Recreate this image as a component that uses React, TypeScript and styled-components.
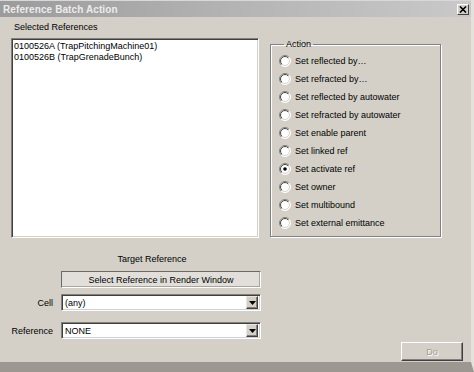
import React from 'react';
import styled, { createGlobalStyle } from 'styled-components';

const GlobalStyle = createGlobalStyle`
  html, body {
    margin: 0;
    padding: 0;
    background: #d4d0c8;
  }

  body {
    font-family: "Liberation Sans", Arial, sans-serif;
    font-size: 9px;
    color: #000;
  }
`;

const StyledWindow = styled.div`
  width: 474px;
  height: 372px;
  box-sizing: border-box;
  display: flex;
  flex-direction: column;
  background: #d4d0c8;
  border-right: 3px solid #e4e2dd;
  border-bottom: 10px solid #9c9891;
  overflow: hidden;
`;

const StyledTitleBar = styled.div`
  height: 17px;
  flex-shrink: 0;
  display: flex;
  align-items: center;
  justify-content: space-between;
  padding: 0 2px 0 3px;
  background: linear-gradient(90deg, #9b9b9b 0%, #b4b4b4 50%, #c9c9c9 100%);
  border-top: 1px solid #d8d8d8;
  box-sizing: border-box;

  .title {
    font-size: 10px;
    font-weight: 700;
    color: #ececec;
    letter-spacing: 0.1px;
  }
`;

const StyledCloseButton = styled.div`
  width: 12px;
  height: 11px;
  box-sizing: border-box;
  background: #d4d0c8;
  border-top: 1px solid #fff;
  border-left: 1px solid #fff;
  border-right: 1px solid #404040;
  border-bottom: 1px solid #404040;
  display: flex;
  align-items: center;
  justify-content: center;
`;

const StyledBody = styled.div`
  flex: 1;
  display: flex;
  flex-direction: column;
  padding: 4px 0 1px 11px;
`;

const StyledTopRow = styled.div`
  display: flex;
  align-items: flex-start;
  gap: 11px;
`;

const StyledSelectedPane = styled.div`
  width: 248px;

  .label {
    line-height: 13px;
    padding-left: 3px;
    margin-bottom: 4px;
  }
`;

const StyledListBox = styled.div`
  height: 200px;
  box-sizing: border-box;
  background: #fff;
  border-top: 1px solid #808080;
  border-left: 1px solid #808080;
  border-right: 1px solid #fff;
  border-bottom: 1px solid #fff;
  box-shadow: inset 1px 1px 0 #404040, inset -1px -1px 0 #d4d0c8;
  padding: 2px 2px;

  .item {
    line-height: 11px;
    white-space: nowrap;
  }
`;

const StyledActionGroup = styled.fieldset`
  width: 171px;
  box-sizing: border-box;
  margin: 17px 0 0 0;
  padding: 1px 0 4px 8px;
  border: 1px solid #808080;
  box-shadow: inset 1px 1px 0 #fff, 1px 1px 0 #fff;

  legend {
    padding: 0 2px;
    margin-left: 5px;
    line-height: 13px;
  }
`;

const StyledRadioRow = styled.label`
  height: 18px;
  display: flex;
  align-items: center;
  gap: 4px;
  white-space: nowrap;
`;

const StyledBottomRow = styled.div`
  display: flex;
  justify-content: space-between;
  align-items: flex-end;
  padding-right: 8px;
`;

const StyledForm = styled.div`
  display: flex;
  flex-direction: column;
  padding: 15px 0 22px 0;

  .heading {
    line-height: 13px;
    margin-left: 50px;
    width: 200px;
    text-align: center;
    padding-right: 18px;
    box-sizing: border-box;
  }
`;

const StyledFieldRow = styled.div<{ $top: number }>`
  display: flex;
  align-items: center;
  gap: 8px;
  margin-top: ${(p) => p.$top}px;

  .field-label {
    width: 42px;
    text-align: right;
  }
`;

const StyledFlatButton = styled.div`
  width: 200px;
  height: 17px;
  box-sizing: border-box;
  display: flex;
  align-items: center;
  justify-content: center;
  background: #e2dfda;
  border-top: 1px solid #6a6a6a;
  border-left: 1px solid #6a6a6a;
  border-right: 1px solid #fff;
  border-bottom: 1px solid #fff;
  box-shadow: inset -1px -1px 0 #a8a59f;
`;

const StyledCombo = styled.div`
  width: 200px;
  height: 17px;
  box-sizing: border-box;
  display: flex;
  align-items: center;
  justify-content: space-between;
  background: #fff;
  border-top: 1px solid #808080;
  border-left: 1px solid #808080;
  border-right: 1px solid #fff;
  border-bottom: 1px solid #fff;
  box-shadow: inset 1px 1px 0 #404040, inset -1px -1px 0 #d4d0c8;
  padding: 2px 2px 2px 3px;

  .value {
    white-space: nowrap;
  }
`;

const StyledDropButton = styled.div`
  width: 12px;
  height: 13px;
  box-sizing: border-box;
  background: #d4d0c8;
  border-top: 1px solid #e8e6e2;
  border-left: 1px solid #e8e6e2;
  border-right: 1px solid #404040;
  border-bottom: 1px solid #404040;
  box-shadow: inset -1px -1px 0 #808080;
  display: flex;
  align-items: center;
  justify-content: center;
`;

const StyledDoButton = styled.div`
  width: 62px;
  height: 19px;
  box-sizing: border-box;
  display: flex;
  align-items: center;
  justify-content: center;
  background: #d4d0c8;
  border-top: 1px solid #fff;
  border-left: 1px solid #fff;
  border-right: 1px solid #404040;
  border-bottom: 1px solid #404040;
  box-shadow: inset -1px -1px 0 #808080;
  color: #a09d97;
  text-shadow: 1px 1px 0 #fff;
`;

const actions = [
  'Set reflected by\u2026',
  'Set refracted by\u2026',
  'Set reflected by autowater',
  'Set refracted by autowater',
  'Set enable parent',
  'Set linked ref',
  'Set activate ref',
  'Set owner',
  'Set multibound',
  'Set external emittance',
];

const RadioIcon = ({ checked }: { checked: boolean }) => (
  <svg width="12" height="12" viewBox="0 0 12 12">
    <defs>
      <linearGradient id="radioOuter" x1="0" y1="0" x2="1" y2="1">
        <stop offset="0.5" stopColor="#808080" />
        <stop offset="0.5" stopColor="#ffffff" />
      </linearGradient>
      <linearGradient id="radioInner" x1="0" y1="0" x2="1" y2="1">
        <stop offset="0.5" stopColor="#404040" />
        <stop offset="0.5" stopColor="#d4d0c8" />
      </linearGradient>
    </defs>
    <circle cx="6" cy="6" r="5.5" fill="#fff" stroke="url(#radioOuter)" strokeWidth="1" />
    <circle cx="6" cy="6" r="4.5" fill="#fff" stroke="url(#radioInner)" strokeWidth="1" />
    {checked && <circle cx="6" cy="6" r="1.8" fill="#000" />}
  </svg>
);

const ArrowIcon = () => (
  <svg width="7" height="4" viewBox="0 0 7 4">
    <path d="M0 0 H7 L3.5 4 Z" fill="#000" />
  </svg>
);

const CloseIcon = () => (
  <svg width="8" height="7" viewBox="0 0 8 7">
    <path d="M1 0.5 L7 6.5 M7 0.5 L1 6.5" stroke="#000" strokeWidth="1.6" />
  </svg>
);

const App: React.FunctionComponent = () => {
  return (
    <>
      <GlobalStyle />
      <StyledWindow>
        <StyledTitleBar>
          <span className="title">Reference Batch Action</span>
          <StyledCloseButton>
            <CloseIcon />
          </StyledCloseButton>
        </StyledTitleBar>
        <StyledBody>
          <StyledTopRow>
            <StyledSelectedPane>
              <div className="label">Selected References</div>
              <StyledListBox>
                <div className="item">0100526A (TrapPitchingMachine01)</div>
                <div className="item">0100526B (TrapGrenadeBunch)</div>
              </StyledListBox>
            </StyledSelectedPane>
            <StyledActionGroup>
              <legend>Action</legend>
              {actions.map((action) => (
                <StyledRadioRow key={action}>
                  <RadioIcon checked={action === 'Set activate ref'} />
                  <span>{action}</span>
                </StyledRadioRow>
              ))}
            </StyledActionGroup>
          </StyledTopRow>
          <StyledBottomRow>
            <StyledForm>
              <div className="heading">Target Reference</div>
              <StyledFieldRow $top={5}>
                <span className="field-label" />
                <StyledFlatButton>Select Reference in Render Window</StyledFlatButton>
              </StyledFieldRow>
              <StyledFieldRow $top={6}>
                <span className="field-label">Cell</span>
                <StyledCombo>
                  <span className="value">(any)</span>
                  <StyledDropButton>
                    <ArrowIcon />
                  </StyledDropButton>
                </StyledCombo>
              </StyledFieldRow>
              <StyledFieldRow $top={11}>
                <span className="field-label">Reference</span>
                <StyledCombo>
                  <span className="value">NONE</span>
                  <StyledDropButton>
                    <ArrowIcon />
                  </StyledDropButton>
                </StyledCombo>
              </StyledFieldRow>
            </StyledForm>
            <StyledDoButton>Do</StyledDoButton>
          </StyledBottomRow>
        </StyledBody>
      </StyledWindow>
    </>
  );
};

export default App;
